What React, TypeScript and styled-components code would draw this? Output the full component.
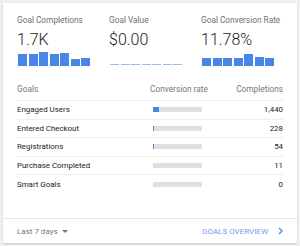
import React from "react";
import styled, { createGlobalStyle } from "styled-components";

const metrics = [
  { label: "Goal Completions", value: "1.7K", bars: [12, 12, 14, 12, 13, 7, 8] },
  { label: "Goal Value", value: "$0.00", bars: [] as number[] },
  { label: "Goal Conversion Rate", value: "11.78%", bars: [8, 8, 8, 8, 12, 9, 8] },
];

const goals = [
  { name: "Engaged Users", rate: 6, count: "1,440" },
  { name: "Entered Checkout", rate: 1, count: "228" },
  { name: "Registrations", rate: 0.5, count: "54" },
  { name: "Purchase Completed", rate: 0, count: "11" },
  { name: "Smart Goals", rate: 0, count: "0" },
];

const App: React.FC = () => (
  <>
    <GlobalStyle />
    <Card>
      <MetricRow>
        {metrics.map(({ label, value, bars }) => (
          <Metric key={label}>
            <MetricLabel>{label}</MetricLabel>
            <MetricValue>{value}</MetricValue>
            <Spark>
              {bars.length
                ? bars.map((h, i) => <SparkBar key={i} style={{ height: h }} />)
                : Array.from({ length: 7 }).map((_, i) => <SparkDash key={i} />)}
            </Spark>
          </Metric>
        ))}
      </MetricRow>
      <Table>
        <HeadRow>
          <HeadCell>Goals</HeadCell>
          <HeadCell>Conversion rate</HeadCell>
          <HeadCell right>Completions</HeadCell>
        </HeadRow>
        {goals.map(({ name, rate, count }, i) => (
          <Row key={name} last={i === goals.length - 1}>
            <Cell>{name}</Cell>
            <Cell>
              <Track>
                <Fill style={{ width: rate }} />
              </Track>
            </Cell>
            <Cell right>{count}</Cell>
          </Row>
        ))}
      </Table>
      <Footer>
        <Range>
          Last 7 days
          <Caret />
        </Range>
        <OverviewLink>
          GOALS OVERVIEW
          <svg width="5" height="8" viewBox="0 0 5 8">
            <path d="M1 1l3 3-3 3" fill="none" stroke="#5b8fe9" strokeWidth="1.4" />
          </svg>
        </OverviewLink>
      </Footer>
    </Card>
  </>
);

const GlobalStyle = createGlobalStyle`
  body {
    margin: 0;
    background: #f1f1f1;
    font-family: Roboto, "Liberation Sans", sans-serif;
  }
`;

const Card = styled.div`
  display: flex;
  flex-direction: column;
  margin: 3px;
  width: 294px;
  height: 240px;
  box-sizing: border-box;
  padding: 0 14px;
  background: #fff;
  box-shadow: 0 1px 2px rgba(0, 0, 0, 0.18);
`;

const MetricRow = styled.div`
  display: flex;
  padding-top: 12px;
`;

const Metric = styled.div`
  display: flex;
  flex-direction: column;
  flex: 0 0 92px;
`;

const MetricLabel = styled.div`
  font-size: 8.3px;
  line-height: 11px;
  color: #6f6f6f;
  white-space: nowrap;
`;

const MetricValue = styled.div`
  margin-top: 5px;
  font-size: 16px;
  font-weight: 300;
  line-height: 18px;
  color: #222;
  white-space: nowrap;
`;

const Spark = styled.div`
  display: flex;
  align-items: flex-end;
  gap: 1.5px;
  width: 72px;
  height: 15px;
  margin-top: 2px;
  margin-left: 1px;
`;

const SparkBar = styled.div`
  flex: 1;
  background: #4a86e8;
`;

const SparkDash = styled.div`
  flex: 1;
  height: 1px;
  margin-bottom: 1px;
  background: #9db9f2;
`;

const Table = styled.div`
  display: flex;
  flex-direction: column;
  margin-top: 11px;
  flex: 1;
`;

const HeadRow = styled.div`
  display: grid;
  grid-template-columns: 133px 1fr auto;
  align-items: center;
  height: 23px;
  border-bottom: 1px solid #eee;
`;

const HeadCell = styled.div<{ right?: boolean }>`
  font-size: 8.3px;
  color: #777;
  text-align: ${({ right }) => (right ? "right" : "left")};
`;

const Row = styled.div<{ last?: boolean }>`
  display: grid;
  grid-template-columns: 133px 1fr auto;
  align-items: center;
  height: 17.6px;
  border-bottom: ${({ last }) => (last ? "none" : "1px solid #eee")};
`;

const Cell = styled.div<{ right?: boolean }>`
  font-size: 7.9px;
  color: #222;
  text-align: ${({ right }) => (right ? "right" : "left")};
`;

const Track = styled.div`
  width: 49px;
  height: 5px;
  margin-left: 3px;
  background: #e0e0e0;
`;

const Fill = styled.div`
  height: 100%;
  background: #4a86e8;
`;

const Footer = styled.div`
  display: flex;
  align-items: center;
  justify-content: space-between;
  height: 24px;
  margin: 0 -14px;
  padding: 0 14px;
  border-top: 1px solid #e6e6e6;
`;

const Range = styled.div`
  display: flex;
  align-items: center;
  gap: 4px;
  font-size: 8px;
  color: #777;
`;

const Caret = styled.span`
  width: 0;
  height: 0;
  border-left: 3px solid transparent;
  border-right: 3px solid transparent;
  border-top: 3px solid #777;
`;

const OverviewLink = styled.div`
  display: flex;
  align-items: center;
  gap: 10px;
  font-size: 8px;
  color: #6d9eeb;
`;

export default App;
